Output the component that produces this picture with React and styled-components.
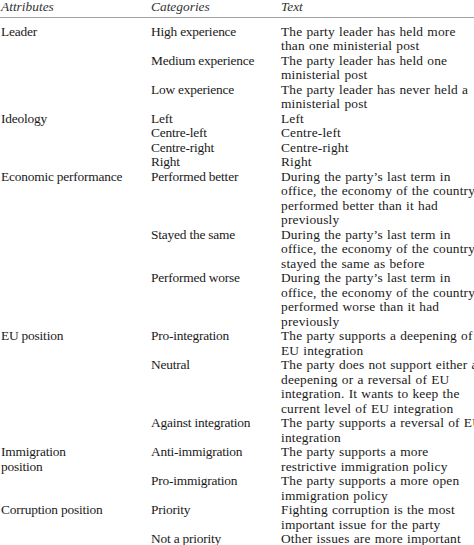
import React from "react";
import styled, { createGlobalStyle } from "styled-components";

const Global = createGlobalStyle`
  html, body { margin: 0; padding: 0; background: #fff; }
  body { width: 474px; height: 545px; overflow: hidden; }
`;

const Table = styled.div`
  width: 474px;
  font-family: "Liberation Serif", "Times New Roman", serif;
  font-size: 13.4px;
  line-height: 14.5px;
  color: #1a1a1a;
  white-space: nowrap;
`;

const HeaderRow = styled.div`
  display: grid;
  grid-template-columns: 150px 130px 1fr;
  padding: 0 0 2px 1px;
  border-bottom: 1.5px solid #a0a0a0;
  font-style: italic;
  color: #333;
`;

const Body = styled.div`
  padding-top: 7px;
`;

const Group = styled.div`
  display: grid;
  grid-template-columns: 150px 130px 1fr;
  padding-left: 1px;
`;

const AttrCell = styled.div`
  grid-row: 1 / span ${(p) => p.$span};
  grid-column: 1;
  letter-spacing: -0.2px;
`;

const CategoryCell = styled.div`
  grid-column: 2;
  letter-spacing: -0.2px;
`;

const TextCell = styled.div`
  grid-column: 3;
  letter-spacing: 0.18px;
  word-spacing: 0.6px;
`;

const HeadCell = styled.div``;

const data = [
  {
    attr: ["Leader"],
    rows: [
      ["High experience", ["The party leader has held more", "than one ministerial post"]],
      ["Medium experience", ["The party leader has held one", "ministerial post"]],
      ["Low experience", ["The party leader has never held a", "ministerial post"]],
    ],
  },
  {
    attr: ["Ideology"],
    rows: [
      ["Left", ["Left"]],
      ["Centre-left", ["Centre-left"]],
      ["Centre-right", ["Centre-right"]],
      ["Right", ["Right"]],
    ],
  },
  {
    attr: ["Economic performance"],
    rows: [
      ["Performed better", ["During the party\u2019s last term in", "office, the economy of the country", "performed better than it had", "previously"]],
      ["Stayed the same", ["During the party\u2019s last term in", "office, the economy of the country", "stayed the same as before"]],
      ["Performed worse", ["During the party\u2019s last term in", "office, the economy of the country", "performed worse than it had", "previously"]],
    ],
  },
  {
    attr: ["EU position"],
    rows: [
      ["Pro-integration", ["The party supports a deepening of", "EU integration"]],
      ["Neutral", ["The party does not support either a", "deepening or a reversal of EU", "integration. It wants to keep the", "current level of EU integration"]],
      ["Against integration", ["The party supports a reversal of EU", "integration"]],
    ],
  },
  {
    attr: ["Immigration", "position"],
    rows: [
      ["Anti-immigration", ["The party supports a more", "restrictive immigration policy"]],
      ["Pro-immigration", ["The party supports a more open", "immigration policy"]],
    ],
  },
  {
    attr: ["Corruption position"],
    rows: [
      ["Priority", ["Fighting corruption is the most", "important issue for the party"]],
      ["Not a priority", ["Other issues are more important"]],
    ],
  },
];

const Lines = ({ lines }) =>
  lines.map((l, i) => (
    <React.Fragment key={i}>
      {i > 0 && <br />}
      {l}
    </React.Fragment>
  ));

export default function App() {
  return (
    <>
      <Global />
      <Table>
        <HeaderRow>
          <HeadCell>Attributes</HeadCell>
          <HeadCell>Categories</HeadCell>
          <HeadCell>Text</HeadCell>
        </HeaderRow>
        <Body>
          {data.map((g, gi) => (
            <Group key={gi}>
              <AttrCell $span={g.rows.length}>
                <Lines lines={g.attr} />
              </AttrCell>
              {g.rows.map((r, ri) => (
                <React.Fragment key={ri}>
                  <CategoryCell style={{ gridRow: ri + 1 }}>{r[0]}</CategoryCell>
                  <TextCell style={{ gridRow: ri + 1 }}>
                    <Lines lines={r[1]} />
                  </TextCell>
                </React.Fragment>
              ))}
            </Group>
          ))}
        </Body>
      </Table>
    </>
  );
}
